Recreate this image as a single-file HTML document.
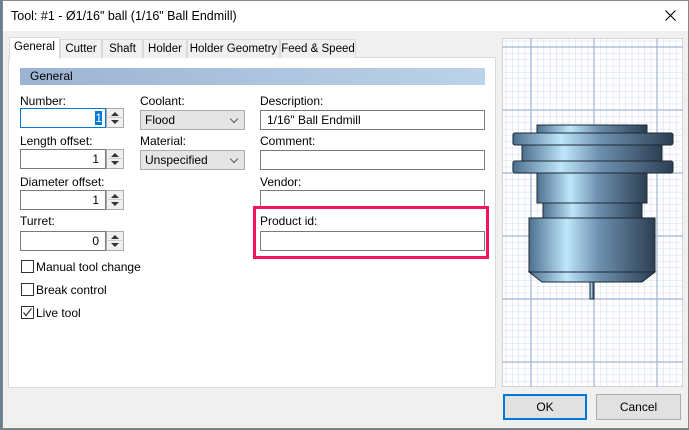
<!DOCTYPE html>
<html><head><style>
*{box-sizing:border-box}
body{margin:0;width:689px;height:430px;overflow:hidden;background:#6b7f93;font-family:"Liberation Sans",sans-serif;font-size:12px;color:#000;position:relative}
.dlg{position:absolute;left:2px;top:0;width:687px;height:429px;background:#f0f0f0;border:1px solid #888}
.wrap{position:absolute;left:-3px;top:-1px;width:689px;height:430px}
.abs{position:absolute}
.title{left:3px;top:1px;width:685px;height:30px;background:#fff}
.tab{position:absolute;top:39px;height:19px;border:1px solid #d9d9d9;border-bottom:none;background:#f0f0f0;text-align:center;line-height:18px;white-space:nowrap;font-size:11.5px}
.panel{left:8px;top:57px;width:488px;height:331px;background:#fff;border:1px solid #d9d9d9}
.lbl{position:absolute;color:#000;white-space:nowrap}
.inp{position:absolute;background:#fff;border:1px solid #7a7a7a;height:20px;padding:2px 6px;line-height:14px}
.spin{position:absolute;width:18px;height:20px;border:1px solid #ababab;background:#f0f0f0}
.spin:before{content:"";position:absolute;left:4px;top:3px;border:4px solid transparent;border-bottom:4px solid #333;border-top:none}
.spin:after{content:"";position:absolute;left:4px;top:11px;border:4px solid transparent;border-top:4px solid #333;border-bottom:none}
.spin i{position:absolute;left:1px;right:1px;top:8px;border-top:1px solid #ccc}
.sel{position:absolute;background:#e5e5e5;border:1px solid #acacac;height:20px;padding:2px 4px;line-height:15px}
.sel:after{content:"";position:absolute;right:7px;top:5px;width:5px;height:5px;border-right:1px solid #555;border-bottom:1px solid #555;transform:rotate(45deg)}
.cb{position:absolute;width:13px;height:13px;border:1px solid #333;background:#fff}
.btn{position:absolute;height:26px;background:#e1e1e1;border:1px solid #adadad;text-align:center;line-height:24px}
</style></head><body>
<div class="dlg"><div class="wrap">
 <div class="abs title"><div class="abs" style="left:8px;top:8px;font-size:12.5px">Tool: #1 - Ø1/16" ball (1/16" Ball Endmill)</div>
  <svg class="abs" style="left:662px;top:9px" width="11" height="11"><path d="M0.5 0.5L10.5 10.5M10.5 0.5L0.5 10.5" stroke="#000" stroke-width="1.1"/></svg></div>
 <div class="abs panel"></div>
 <div class="tab" style="left:9px;top:37px;width:51px;height:22px;background:#fff;z-index:2">General</div>
 <div class="tab" style="left:60px;width:42px">Cutter</div>
 <div class="tab" style="left:102px;width:41px">Shaft</div>
 <div class="tab" style="left:143px;width:44px">Holder</div>
 <div class="tab" style="left:187px;width:93px">Holder Geometry</div>
 <div class="tab" style="left:280px;width:76px">Feed &amp; Speed</div>
 <div class="abs" style="left:20px;top:68px;width:465px;height:17px;background:linear-gradient(90deg,#9cb4d1,#bcd2ea);padding:2px 10px;line-height:13px">General</div>

 <div class="lbl" style="left:20px;top:94px">Number:</div>
 <div class="inp" style="left:20px;top:108px;width:86px;border:1px solid #0078d7;text-align:right;padding-right:3px"><span style="background:#0078d7;color:#fff">1</span></div>
 <div class="spin" style="left:106px;top:108px"><i></i></div>
 <div class="lbl" style="left:20px;top:134px">Length offset:</div>
 <div class="inp" style="left:20px;top:149px;width:86px;text-align:right">1</div>
 <div class="spin" style="left:106px;top:149px"><i></i></div>
 <div class="lbl" style="left:20px;top:175px">Diameter offset:</div>
 <div class="inp" style="left:20px;top:190px;width:86px;text-align:right">1</div>
 <div class="spin" style="left:106px;top:190px"><i></i></div>
 <div class="lbl" style="left:20px;top:214px">Turret:</div>
 <div class="inp" style="left:20px;top:231px;width:86px;text-align:right">0</div>
 <div class="spin" style="left:106px;top:231px"><i></i></div>

 <div class="cb" style="left:21px;top:260px"></div><div class="lbl" style="left:36px;top:260px">Manual tool change</div>
 <div class="cb" style="left:21px;top:283px"></div><div class="lbl" style="left:36px;top:283px">Break control</div>
 <div class="cb" style="left:21px;top:306px"><svg width="11" height="11" class="abs" style="left:0;top:0"><path d="M1.5 5.5L4 8.5L9.5 1.5" stroke="#333" fill="none" stroke-width="1.2"/></svg></div><div class="lbl" style="left:36px;top:306px">Live tool</div>

 <div class="lbl" style="left:140px;top:94px">Coolant:</div>
 <div class="sel" style="left:140px;top:110px;width:105px">Flood</div>
 <div class="lbl" style="left:140px;top:134px">Material:</div>
 <div class="sel" style="left:140px;top:150px;width:105px">Unspecified</div>

 <div class="lbl" style="left:260px;top:94px">Description:</div>
 <div class="inp" style="left:260px;top:110px;width:225px">1/16" Ball Endmill</div>
 <div class="lbl" style="left:260px;top:134px">Comment:</div>
 <div class="inp" style="left:260px;top:150px;width:225px"></div>
 <div class="lbl" style="left:260px;top:175px">Vendor:</div>
 <div class="inp" style="left:260px;top:190px;width:225px"></div>
 <div class="abs" style="left:253px;top:206px;width:236px;height:53px;border:3px solid #f2145c;background:#fff"></div>
 <div class="lbl" style="left:260px;top:214px">Product id:</div>
 <div class="inp" style="left:260px;top:231px;width:225px"></div>

 <svg class="abs" style="left:502px;top:38px" width="181" height="349">
  <defs>
   <pattern id="mn" x="29" y="9" width="6.3" height="6.3" patternUnits="userSpaceOnUse"><path d="M0 0V6.3M0 0H6.3" stroke="#c5d3e6" stroke-width="0.8" fill="none"/></pattern>
   <linearGradient id="g" x1="0" x2="1"><stop offset="0" stop-color="#4d6f8f"/><stop offset="0.3" stop-color="#bfe6fb"/><stop offset="0.55" stop-color="#6e91b0"/><stop offset="1" stop-color="#2c3f52"/></linearGradient>
  </defs>
  <rect x="0" y="0" width="181" height="349" fill="#fff" stroke="#aaa"/>
  <rect x="1" y="1" width="179" height="347" fill="url(#mn)"/>
  <g stroke="#9db6d3" stroke-width="1.2">
   <path d="M29 0V349M92 0V349M155 0V349M0 9H181M0 72H181M0 135H181M0 198H181M0 261H181M0 324H181"/>
  </g>
  <g fill="url(#g)" stroke="#1d2a36" stroke-width="1">
   <rect x="35" y="87" width="110" height="9"/>
   <rect x="11" y="95" width="160" height="12" rx="2"/>
   <rect x="20" y="107" width="140" height="16"/>
   <rect x="11" y="123" width="160" height="12" rx="2"/>
   <rect x="35" y="135" width="110" height="30"/>
   <rect x="41" y="165" width="99" height="15"/>
   <rect x="27" y="180" width="126" height="54"/>
   <path d="M27 234H153L140 244H40Z"/>
   <rect x="88" y="244" width="4" height="17"/>
  </g>
 </svg>

 <div class="btn" style="left:503px;top:394px;width:84px;border:2px solid #0078d7;line-height:22px">OK</div>
 <div class="btn" style="left:596px;top:394px;width:85px">Cancel</div>
</div></div>
</body></html>
